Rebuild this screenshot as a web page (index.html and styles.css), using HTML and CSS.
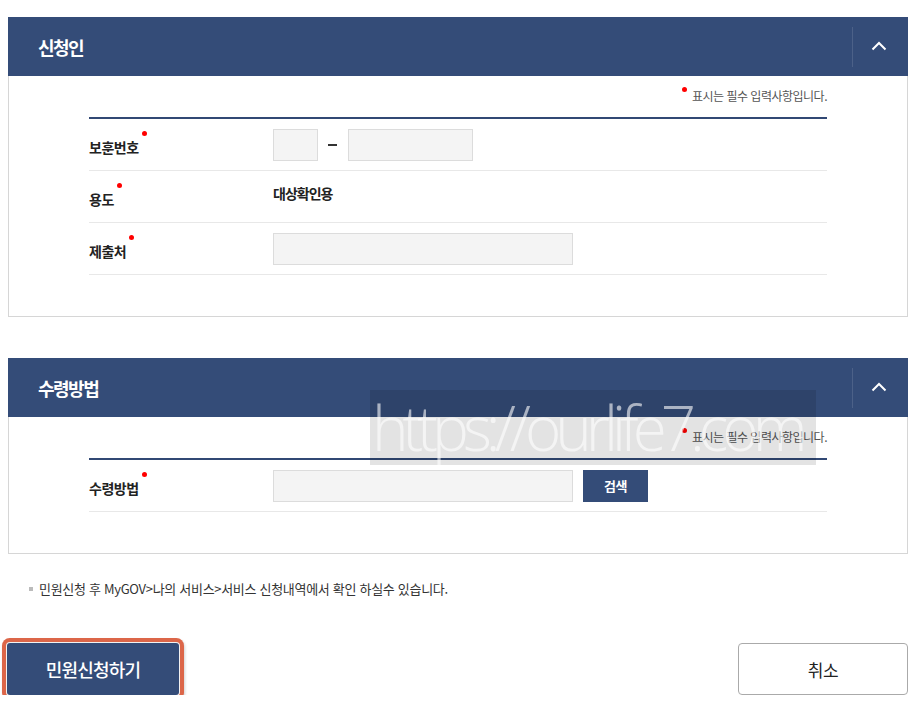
FILE: index.html
```html
<!DOCTYPE html>
<html lang="ko">
<head>
    <meta charset="UTF-8">
    <meta name="viewport" content="width=device-width, initial-scale=1.0">
    <title>민원신청</title>
    <link rel="stylesheet" href="styles.css">
</head>
<body>
    <div class="page">
        <!-- 신청인 -->
        <div class="section">
            <div class="section-head">
                <h2 class="section-title">신청인</h2>
                <button class="toggle" type="button" aria-label="접기">
                    <svg width="16" height="10" viewBox="0 0 16 10"><polyline points="1.5,8.5 8,2 14.5,8.5" fill="none" stroke="#fff" stroke-width="2"/></svg>
                </button>
            </div>
            <div class="section-body">
                <p class="req-note"><span class="dot"></span>표시는 필수 입력사항입니다.</p>
                <div class="form-table">
                    <div class="form-row">
                        <div class="form-label"><span class="label-text">보훈번호<span class="dot req"></span></span></div>
                        <div class="form-field">
                            <input class="input input-xs" type="text">
                            <span class="dash"></span>
                            <input class="input input-sm" type="text">
                        </div>
                    </div>
                    <div class="form-row">
                        <div class="form-label"><span class="label-text">용도<span class="dot req"></span></span></div>
                        <div class="form-field">
                            <span class="field-value">대상확인용</span>
                        </div>
                    </div>
                    <div class="form-row">
                        <div class="form-label"><span class="label-text">제출처<span class="dot req"></span></span></div>
                        <div class="form-field">
                            <input class="input input-md" type="text">
                        </div>
                    </div>
                </div>
            </div>
        </div>

        <!-- 수령방법 -->
        <div class="section">
            <div class="section-head">
                <h2 class="section-title">수령방법</h2>
                <button class="toggle" type="button" aria-label="접기">
                    <svg width="16" height="10" viewBox="0 0 16 10"><polyline points="1.5,8.5 8,2 14.5,8.5" fill="none" stroke="#fff" stroke-width="2"/></svg>
                </button>
            </div>
            <div class="section-body">
                <p class="req-note"><span class="dot"></span>표시는 필수 입력사항입니다.</p>
                <div class="form-table">
                    <div class="form-row">
                        <div class="form-label"><span class="label-text">수령방법<span class="dot req"></span></span></div>
                        <div class="form-field">
                            <input class="input input-md" type="text">
                            <button class="btn-search" type="button">검색</button>
                        </div>
                    </div>
                </div>
            </div>
        </div>

        <p class="notice">민원신청 후 MyGOV&gt;나의 서비스&gt;서비스 신청내역에서 확인 하실수 있습니다.</p>

        <div class="btn-area">
            <button class="btn btn-primary" type="button">민원신청하기</button>
            <button class="btn btn-cancel" type="button">취소</button>
        </div>
    </div>

    <div class="watermark">https://ourlife7.com</div>
</body>
</html>
```

FILE: styles.css
```css
body {
    margin: 0;
    background-color: #fff;
    color: #222;
    font-family: "Noto Sans CJK KR", "Noto Sans", sans-serif;
}

.page {
    padding: 17px 12px 0 8px;
}

.section + .section {
    margin-top: 41px;
}

.section-head {
    display: flex;
    align-items: center;
    justify-content: space-between;
    height: 59px;
    padding-left: 30px;
    background-color: #344c78;
}

.section-title {
    margin: 0;
    color: #fff;
    font-size: 18px;
    font-weight: 700;
    letter-spacing: -1.5px;
    line-height: 20px;
}

.toggle {
    display: flex;
    align-items: center;
    justify-content: center;
    width: 56px;
    height: 40px;
    padding: 0 4px 2px 0;
    border: none;
    border-left: 1px solid rgba(255, 255, 255, 0.12);
    background: none;
    cursor: pointer;
}

.section-body {
    padding: 0 80px 41px;
    border: 1px solid #d6d6d6;
    border-top: none;
}

.req-note {
    margin: 0;
    height: 41px;
    padding-top: 10px;
    box-sizing: border-box;
    text-align: right;
    font-size: 12px;
    line-height: 20px;
    letter-spacing: -0.5px;
    color: #555;
}

.dot {
    display: inline-block;
    width: 5px;
    height: 5px;
    border-radius: 50%;
    background-color: #f00;
    vertical-align: top;
    margin: 1px 5px 0 0;
}

.form-table {
    border-top: 2px solid #314874;
}

.form-row {
    display: flex;
    align-items: center;
    height: 52px;
    border-bottom: 1px solid #e8e8e8;
    box-sizing: border-box;
}

.form-label {
    width: 184px;
    flex-shrink: 0;
    padding-top: 2px;
}

.label-text {
    position: relative;
    font-size: 14px;
    font-weight: 700;
    letter-spacing: -0.5px;
    line-height: 20px;
    color: #222;
}

.label-text .req {
    position: absolute;
    right: -8px;
    top: -6px;
    margin: 0;
}

.form-field {
    display: flex;
    align-items: center;
}

.field-value {
    margin-top: -7px;
    font-size: 14px;
    font-weight: 700;
    letter-spacing: -1px;
    line-height: 20px;
    color: #222;
}

.input {
    height: 32px;
    box-sizing: border-box;
    border: 1px solid #dcdcdc;
    background-color: #f4f4f4;
    padding: 0 8px;
    font-family: inherit;
    font-size: 13px;
}

.input-xs { width: 45px; }
.input-sm { width: 125px; }
.input-md { width: 300px; }

.dash {
    display: inline-block;
    width: 9px;
    height: 2px;
    margin: 0 11px 0 10px;
    background-color: #333;
}

.btn-search {
    width: 65px;
    height: 32px;
    margin-left: 10px;
    border: none;
    background-color: #344c78;
    color: #fff;
    font-family: inherit;
    font-size: 13px;
    font-weight: 700;
    letter-spacing: -0.5px;
    cursor: pointer;
}

.notice {
    margin: 25px 0 0;
    padding-left: 21px;
    font-size: 13px;
    line-height: 20px;
    letter-spacing: -0.3px;
    color: #333;
}

.notice::before {
    content: "";
    display: inline-block;
    width: 4px;
    height: 4px;
    margin: 0 6px 2px 0;
    vertical-align: middle;
    background-color: #bbb;
}

.btn-area {
    display: flex;
    justify-content: space-between;
    align-items: center;
    margin-top: 44px;
}

.btn {
    height: 52px;
    border-radius: 4px;
    font-family: inherit;
    font-size: 18px;
    letter-spacing: -0.8px;
    cursor: pointer;
}

.btn-primary {
    width: 172px;
    margin-left: -1px;
    border: none;
    border-radius: 3px;
    background-color: #344c78;
    color: #fff;
    font-weight: 500;
    box-shadow: 0 0 0 1px #f2f2f2, 0 0 0 5px #dc6649, 1px 2px 3px 5px rgba(0, 0, 0, 0.18);
}

.btn-cancel {
    width: 170px;
    border: 1px solid #aaa;
    background-color: #fff;
    color: #222;
    font-size: 17px;
    letter-spacing: -0.5px;
}

.watermark {
    position: absolute;
    left: 370px;
    top: 390px;
    width: 446px;
    height: 75px;
    white-space: nowrap;
    background-color: rgba(0, 0, 0, 0.11);
    color: rgba(255, 255, 255, 0.6);
    font-family: "Open Sans", sans-serif;
    font-weight: 300;
    font-size: 62px;
    letter-spacing: -6px;
    line-height: 75px;
    padding-left: 2px;
    box-sizing: border-box;
    pointer-events: none;
}
```
